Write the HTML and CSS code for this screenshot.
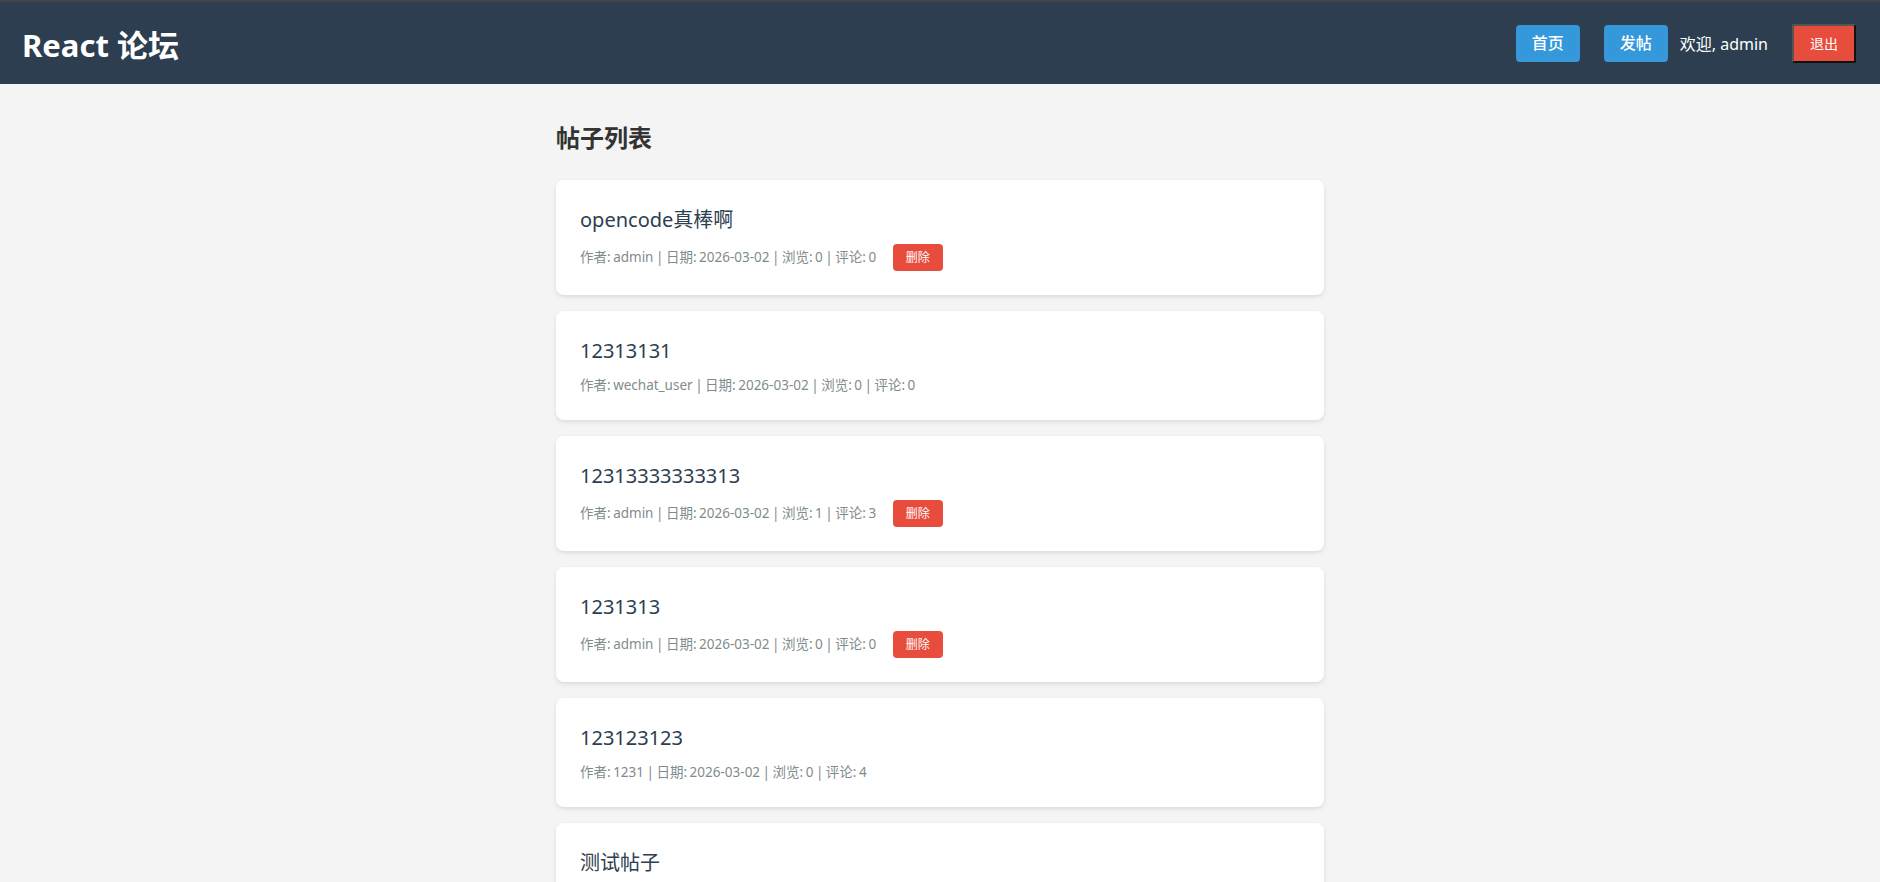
FILE: index.html
```html
<!DOCTYPE html>
<html lang="zh-CN">
<head>
  <meta charset="UTF-8">
  <title>React 论坛</title>
  <link rel="stylesheet" href="styles.css">
</head>
<body>

<header class="navbar">
  <div class="brand">React 论坛</div>
  <nav class="nav-links">
    <a class="nav-btn" href="#">首页</a>
    <a class="nav-btn post" href="#">发帖</a>
    <span class="welcome">欢迎, admin</span>
    <button class="logout">退出</button>
  </nav>
</header>

<main class="container">
  <h2 class="page-title">帖子列表</h2>

  <div class="post-card">
    <h3 class="post-title">opencode真棒啊</h3>
    <div class="post-meta">作者: admin | 日期: 2026-03-02 | 浏览: 0 | 评论: 0 <button class="delete-btn">删除</button></div>
  </div>

  <div class="post-card">
    <h3 class="post-title">12313131</h3>
    <div class="post-meta">作者: wechat_user | 日期: 2026-03-02 | 浏览: 0 | 评论: 0</div>
  </div>

  <div class="post-card">
    <h3 class="post-title">12313333333313</h3>
    <div class="post-meta">作者: admin | 日期: 2026-03-02 | 浏览: 1 | 评论: 3 <button class="delete-btn">删除</button></div>
  </div>

  <div class="post-card">
    <h3 class="post-title">1231313</h3>
    <div class="post-meta">作者: admin | 日期: 2026-03-02 | 浏览: 0 | 评论: 0 <button class="delete-btn">删除</button></div>
  </div>

  <div class="post-card">
    <h3 class="post-title">123123123</h3>
    <div class="post-meta">作者: 1231 | 日期: 2026-03-02 | 浏览: 0 | 评论: 4</div>
  </div>

  <div class="post-card">
    <h3 class="post-title">测试帖子</h3>
  </div>
</main>

</body>
</html>
```

FILE: styles.css
```css
body {
  margin: 0;
  background-color: #f4f4f4;
  font-family: "Noto Sans", "Noto Sans CJK SC", sans-serif;
  color: #333;
}
.navbar {
  display: flex;
  align-items: center;
  justify-content: space-between;
  height: 82px;
  padding: 0 24px 0 22px;
  background-color: #2c3e50;
  border-top: 2px solid #454545;
}
.brand {
  color: #fff;
  font-size: 31px;
  font-weight: bold;
}
.nav-links {
  display: flex;
  align-items: center;
}
.nav-btn {
  display: inline-block;
  background-color: #3498db;
  color: #fff;
  text-decoration: none;
  font-size: 16px;
  font-weight: 500;
  line-height: 21px;
  padding: 8px 16px;
  border-radius: 4px;
  margin-right: 24px;
}
.nav-btn.post {
  margin-right: 12px;
}
.welcome {
  color: #fff;
  font-size: 16px;
  margin-right: 24px;
}
.logout {
  background-color: #e74c3c;
  color: #fff;
  font-family: inherit;
  font-size: 14px;
  line-height: 19px;
  padding: 8px 16px;
  border: 2px solid;
  border-color: #555 #111 #111 #555;
  border-radius: 2px;
  cursor: pointer;
}
.container {
  max-width: 768px;
  margin: 0 auto;
  padding: 20px 16px;
}
.page-title {
  font-size: 24px;
  line-height: 36px;
  margin: 16px 0 24px;
  color: #333;
}
.post-card {
  background-color: #fff;
  border-radius: 8px;
  box-shadow: 0 2px 4px rgba(0, 0, 0, 0.1);
  padding: 24px;
  margin-bottom: 16px;
}
.post-title {
  font-size: 20px;
  font-weight: normal;
  line-height: 32px;
  color: #2c3e50;
  margin: 0 0 8px;
}
.post-meta {
  font-size: 13.5px;
  line-height: 21px;
  word-spacing: -1px;
  color: #7f8c8d;
}
.delete-btn {
  background-color: #e74c3c;
  color: #fff;
  border: none;
  border-radius: 4px;
  font-family: inherit;
  font-size: 12px;
  line-height: 17px;
  word-spacing: normal;
  padding: 5px 13px;
  margin-left: 14px;
  cursor: pointer;
}
```
